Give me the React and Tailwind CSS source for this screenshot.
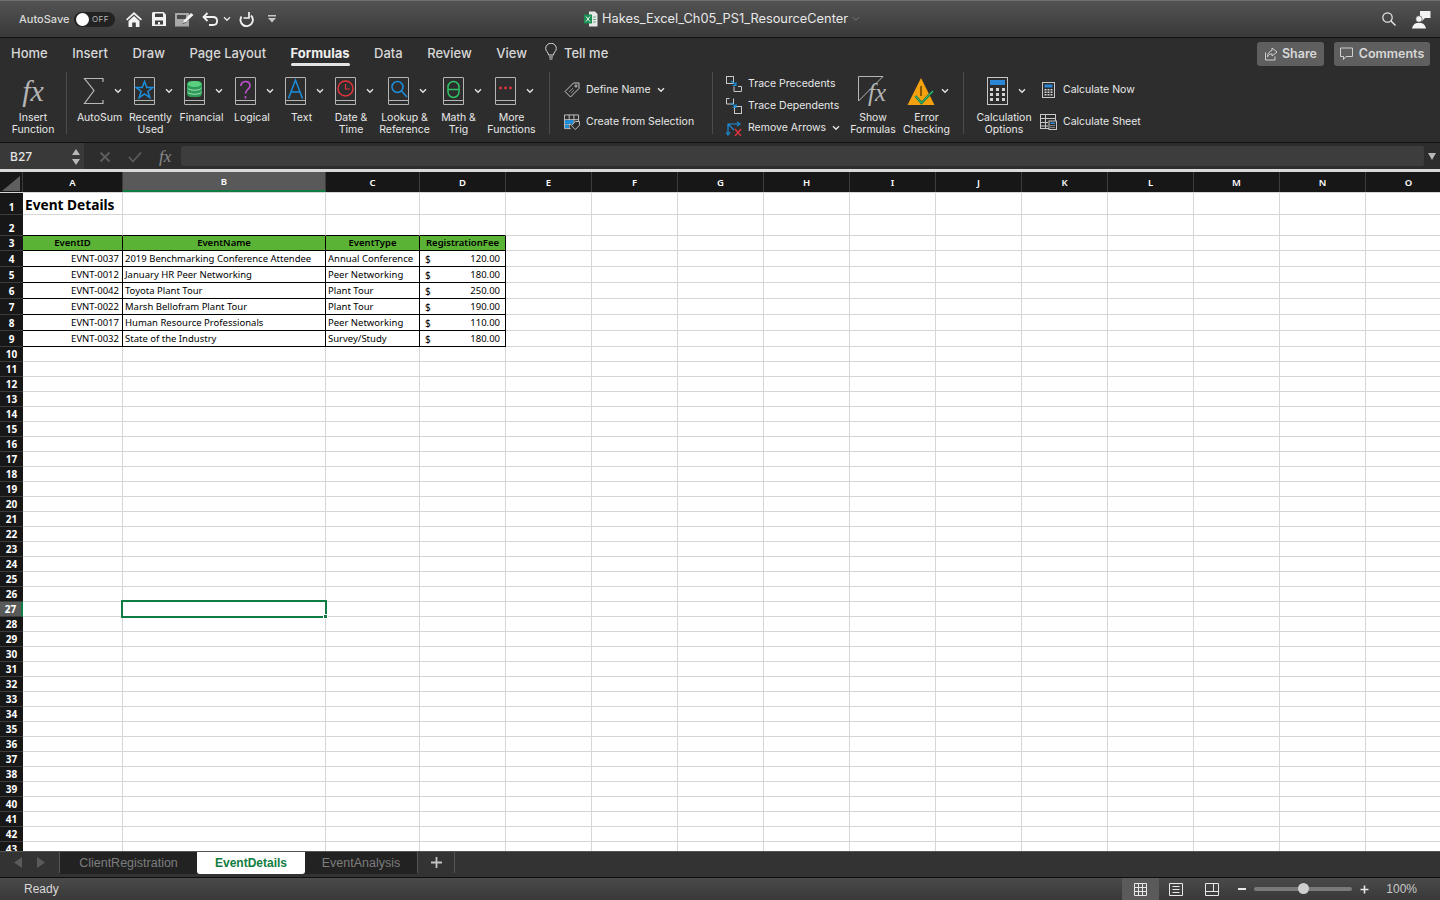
import React from "react";

const COLS = [
  ["A", 100], ["B", 203], ["C", 94], ["D", 86], ["E", 86], ["F", 86], ["G", 86], ["H", 86],
  ["I", 86], ["J", 86], ["K", 86], ["L", 86], ["M", 86], ["N", 86], ["O", 86],
];

const rowHeight = (r) => {
  if (r === 1) return 22;
  if (r === 2) return 21;
  if (r === 3 || r >= 10) return 15;
  return 16;
};

const DATA = [
  ["EVNT-0037", "2019 Benchmarking Conference Attendee", "Annual Conference", "120.00"],
  ["EVNT-0012", "January HR Peer Networking", "Peer Networking", "180.00"],
  ["EVNT-0042", "Toyota Plant Tour", "Plant Tour", "250.00"],
  ["EVNT-0022", "Marsh Bellofram Plant Tour", "Plant Tour", "190.00"],
  ["EVNT-0017", "Human Resource Professionals", "Peer Networking", "110.00"],
  ["EVNT-0032", "State of the Industry", "Survey/Study", "180.00"],
];
const HEAD = ["EventID", "EventName", "EventType", "RegistrationFee"];

function Chevron({ className = "" }) {
  return (
    <svg width="8" height="6" viewBox="0 0 8 6" className={className}>
      <path d="M1 1.2 L4 4.2 L7 1.2" fill="none" stroke="#e4e4e4" strokeWidth="1.4" />
    </svg>
  );
}

function Book({ children }) {
  return (
    <svg width="21" height="28" viewBox="0 0 21 28" className="shrink-0">
      <path d="M1 .5 H20 a.5 .5 0 0 1 .5 .5 V27.5 H1 a.5 .5 0 0 1 -.5 -.5 V1 a.5 .5 0 0 1 .5 -.5 Z" fill="none" stroke="#b5b5b5" />
      <path d="M.5 23.5 H20.5" stroke="#b5b5b5" />
      {children}
    </svg>
  );
}

const ICONS = {
  sigma: (
    <svg width="21" height="28" viewBox="0 0 21 28" className="shrink-0">
      <path d="M20 5 V1.5 H1.5 L11 13.5 L1.5 26.5 H20 V23" fill="none" stroke="#b8b8b8" strokeWidth="1.2" />
    </svg>
  ),
  star: <Book><path d="M10.5 4.5 l2.3 6 h6 l-4.9 3.9 l1.9 6.2 l-5.3 -3.7 l-5.3 3.7 l1.9 -6.2 l-4.9 -3.9 h6 Z" fill="none" stroke="#1c8fdc" strokeWidth="1.5" /></Book>,
  db: (
    <Book>
      <rect x="3" y="4" width="15" height="16" rx="4" fill="#2e9a58" />
      <ellipse cx="10.5" cy="7" rx="7" ry="3" fill="#5ad07f" />
      <path d="M3.5 11 c2 3 12 3 14 0 M3.5 15 c2 3 12 3 14 0" fill="none" stroke="#a8e6bc" strokeWidth="1" />
    </Book>
  ),
  q: <Book><path d="M6 9 c0 -6 9 -6 9 -.5 c0 4 -4.5 4 -4.5 8 M10.5 19 v2.5" fill="none" stroke="#c552d6" strokeWidth="1.6" /></Book>,
  a: <Book><path d="M3.5 21.5 L10.5 3 L17.5 21.5 M6 15 H15" fill="none" stroke="#1c8fdc" strokeWidth="1.5" /></Book>,
  clock: <Book><circle cx="10.5" cy="11.5" r="7.5" fill="none" stroke="#e0353d" strokeWidth="1.5" /><path d="M10.5 7 V12 H15" fill="none" stroke="#e0353d" strokeWidth="1.2" /></Book>,
  search: <Book><circle cx="9.5" cy="10" r="5.5" fill="none" stroke="#1c8fdc" strokeWidth="1.5" /><path d="M13.5 14 L19 20" stroke="#1c8fdc" strokeWidth="1.5" /></Book>,
  theta: <Book><rect x="5" y="4.5" width="11" height="16" rx="5.5" fill="none" stroke="#2fc466" strokeWidth="1.5" /><path d="M5 12.5 H16" stroke="#2fc466" strokeWidth="1.5" /></Book>,
  dots: <Book><circle cx="5.5" cy="11" r="1.4" fill="#e0353d" /><circle cx="10.5" cy="11" r="1.4" fill="#e0353d" /><circle cx="15.5" cy="11" r="1.4" fill="#e0353d" /></Book>,
  calc: (
    <svg width="21" height="28" viewBox="0 0 21 28" className="shrink-0">
      <rect x=".5" y=".5" width="20" height="27" fill="none" stroke="#c8c8c8" />
      <rect x="3" y="3" width="15" height="5" fill="#2a86d6" />
      {[11, 16, 21].map((y) => [3, 9, 15].map((x) => <rect key={`${x}-${y}`} x={x} y={y} width="3" height="3" fill="#d4d4d4" />))}
    </svg>
  ),
  warn: (
    <svg width="28" height="28" viewBox="0 0 28 28" className="shrink-0">
      <path d="M14 1 L27.5 28 H.5 Z" fill="#f4a10f" />
      <path d="M14 9 V19" stroke="#5a3a00" strokeWidth="1.4" />
      <path d="M8.5 19 L14.5 26 L26 14" fill="none" stroke="#0c7a46" strokeWidth="2.4" />
      <path d="M8.5 19 L14.5 26 L26 14" fill="none" stroke="#46c77f" strokeWidth="1" />
    </svg>
  ),
  showfx: (
    <svg width="30" height="30" viewBox="0 0 30 30" className="shrink-0">
      <path d="M25 .5 H.5 V25 Z" fill="none" stroke="#b5b5b5" />
      <text x="10" y="25" fontFamily="'Liberation Serif', serif" fontStyle="italic" fontSize="25" fill="#b5b5b5">fx</text>
    </svg>
  ),
};

function RibbonButton({ w, pl, icon, label, chevron = true, iconW = "w-[21px]", chevronGap = "ml-[10px]" }) {
  return (
    <div className={`shrink-0 flex flex-col ${w}`}>
      <div className={`flex items-center h-[28px] ${pl}`}>
        <div className={`${iconW} flex justify-center`}>{icon}</div>
        {chevron && <Chevron className={chevronGap} />}
      </div>
      <div className="mt-[7px] text-center text-[10.5px] leading-[12px] text-[#e8e8e8] whitespace-nowrap">
        {label.map((l) => <div key={l}>{l}</div>)}
      </div>
    </div>
  );
}

function SmallRow({ icon, text, chevron, h = "h-[22px]", gap = "gap-[6px]" }) {
  return (
    <div className={`flex items-center ${h} ${gap} text-[10.5px] text-[#e8e8e8] whitespace-nowrap`}>
      {icon}
      <span>{text}</span>
      {chevron && <Chevron />}
    </div>
  );
}

const Sep = () => <div className="shrink-0 w-px h-[62px] bg-[#4c4c4c]" />;

function TraceIcon({ variant }) {
  if (variant === "remove") {
    return (
      <svg width="16" height="16" viewBox="0 0 16 16" className="shrink-0">
        <path d="M2 14 V4 H13 M2 4 L8 10" fill="none" stroke="#1c8fdc" strokeWidth="1.2" />
        <path d="M0 12 L2 15 L4 12 M11 2 L14 4 L11 6" fill="none" stroke="#1c8fdc" strokeWidth="1.1" />
        <path d="M9 9 L15 16 M15 9 L9 16" stroke="#e0353d" strokeWidth="1.4" />
      </svg>
    );
  }
  const a = variant === "prec";
  return (
    <svg width="16" height="16" viewBox="0 0 16 16" className="shrink-0">
      {a ? (
        <>
          <rect x=".5" y=".5" width="7" height="7" fill="none" stroke="#c8c8c8" />
          <path d="M8 10.5 V15.5 H15.5 V10.5 H12" fill="none" stroke="#c8c8c8" />
        </>
      ) : (
        <>
          <path d="M3.5 .5 H.5 V6 H7.5 V.5" fill="none" stroke="#c8c8c8" />
          <rect x="8.5" y="8.5" width="7" height="7" fill="none" stroke="#c8c8c8" />
        </>
      )}
      <path d="M5 5 L10 9 M10 6 V9.5 H6.5" fill="none" stroke="#1c8fdc" strokeWidth="1.1" />
    </svg>
  );
}

function TitleBar() {
  return (
    <div className="h-[38px] shrink-0 flex items-center bg-gradient-to-b from-[#535353] to-[#393939] border-t border-t-[#707070] border-b border-b-[#111111] text-[#e6e6e6]">
      <div className="w-[584px] shrink-0 flex items-center pl-[19px]">
        <span className="text-[11px] font-medium text-[#d8d8d8] w-[55px]">AutoSave</span>
        <div className="w-[41px] h-[15px] rounded-full bg-[#222222] flex items-center relative">
          <div className="w-[13px] h-[13px] rounded-full bg-white ml-[2px]" />
          <span className="text-[8px] text-[#bbbbbb] ml-[3px] tracking-[.4px]">OFF</span>
        </div>
        <svg width="16" height="15" viewBox="0 0 16 15" className="ml-[11px]">
          <path d="M8 0 L0 7.300 L1.200 8.600 L8 2.500 L14.800 8.600 L16 7.300 Z" fill="#f2f2f2" />
          <path d="M2.500 9 L8 4 L13.500 9 V15 H9.800 V10.500 H6.200 V15 H2.500 Z" fill="#f2f2f2" />
        </svg>
        <svg width="14" height="14" viewBox="0 0 14 14" className="ml-[10px]">
          <path d="M1 0 H11.500 L14 2.500 V14 H0 V1 Z" fill="#f2f2f2" />
          <rect x="3" y="1.500" width="8" height="3.500" fill="#3f3f3f" />
          <rect x="3" y="8.500" width="8" height="4" fill="#3f3f3f" />
          <rect x="6" y="10" width="2" height="2.500" fill="#f2f2f2" />
        </svg>
        <svg width="19" height="15" viewBox="0 0 19 15" className="ml-[9px]">
          <path d="M0 1 H14 V4 L9 9.500 L7.500 12 L10.500 11 L14 7.500 V14.500 H0 Z" fill="#a8a8a8" />
          <rect x="2" y="3" width="9" height="4" fill="#4a4a4a" />
          <path d="M8 11 L9 8.500 L16 1 L18.500 3 L11 10 Z" fill="#f2f2f2" />
        </svg>
        <svg width="17" height="14" viewBox="0 0 17 14" className="ml-[8px]">
          <path d="M5.500 1 L1.500 5 L5.500 9 M1.500 5 H11 C16.500 5 16.500 13 11 13 H7" fill="none" stroke="#f2f2f2" strokeWidth="1.800" />
        </svg>
        <Chevron className="ml-[4px]" />
        <svg width="15" height="15" viewBox="0 0 15 15" className="ml-[8px]">
          <path d="M2.500 4.500 A6.200 6.200 0 1 0 12 3.500" fill="none" stroke="#f2f2f2" strokeWidth="1.900" />
          <path d="M10 0 V6 H4.500" fill="none" stroke="#f2f2f2" strokeWidth="1.700" />
        </svg>
        <svg width="8" height="8" viewBox="0 0 8 8" className="ml-[14px]">
          <path d="M0 0 H8 V1.400 H0 Z M0 3 H8 L4 7.600 Z" fill="#c8c8c8" />
        </svg>
      </div>
      <svg width="14" height="16" viewBox="0 0 14 16" className="shrink-0">
        <path d="M5 .5 H11 L13.500 3 V15.500 H5 Z" fill="#e8e8e8" />
        <rect x="0" y="3.500" width="8" height="9" fill="#1d8f55" />
        <path d="M2 5.500 L6 10.500 M6 5.500 L2 10.500" stroke="#fff" strokeWidth=".9" />
        <path d="M9 6 H12 M9 8.500 H12 M9 11 H12" stroke="#6aa883" />
      </svg>
      <span className="ml-[4px] text-[12.8px] text-[#e8e8e8] whitespace-nowrap">Hakes_Excel_Ch05_PS1_ResourceCenter</span>
      <svg width="8" height="6" viewBox="0 0 8 6" className="ml-[4px]"><path d="M1 1.200 L4 4.200 L7 1.200" fill="none" stroke="#777" /></svg>
      <div className="ml-auto flex items-center pr-[9px]">
        <svg width="14" height="14" viewBox="0 0 14 14">
          <circle cx="5.500" cy="5.500" r="4.700" fill="none" stroke="#e8e8e8" strokeWidth="1.200" />
          <path d="M9 9 L13.500 13.500" stroke="#e8e8e8" strokeWidth="1.400" />
        </svg>
        <svg width="19" height="19" viewBox="0 0 19 19" className="ml-[16px]">
          <path d="M8 1 H18.500 V8 L13 8 L10 11 V8 H8 Z" fill="#f4f4f4" />
          <circle cx="7" cy="9" r="3.200" fill="#f4f4f4" stroke="#444" strokeWidth=".6" />
          <path d="M0 18.500 C1 14 4 13 5.500 13 H8.500 C10 13 13 14 14 18.500 Z" fill="#f4f4f4" />
        </svg>
      </div>
    </div>
  );
}

function TabRow() {
  const tabs = ["Home", "Insert", "Draw", "Page Layout", "Formulas", "Data", "Review", "View"];
  return (
    <div className="h-[30px] shrink-0 flex items-center pl-[11px] pr-[10px] text-[13px] font-medium text-[#d8d8d8]">
      <div className="flex items-center gap-[24.5px] mt-[2px]">
        {tabs.map((t) => (
          <div key={t} className={t === "Formulas" ? "relative font-bold text-[#f0f0f0]" : ""}>
            {t}
            {t === "Formulas" && <div className="absolute left-0 right-0 top-[19px] h-[3px] rounded-full bg-[#e4e4e4]" />}
          </div>
        ))}
      </div>
      <svg width="12" height="18" viewBox="0 0 12 18" className="ml-[18px] -mt-[2px]">
        <path d="M3.500 12 C3.500 9 .7 8.500 .7 5.500 A5.300 5.300 0 0 1 11.300 5.500 C11.300 8.500 8.500 9 8.500 12 Z" fill="none" stroke="#d8d8d8" />
        <path d="M4 14 H8 M4.500 16 H7.500" stroke="#d8d8d8" />
      </svg>
      <span className="ml-[7px] mt-[2px]">Tell me</span>
      <div className="ml-auto flex items-center gap-[10px] mt-[2px] text-[#d8d8d8] text-[12.5px] font-semibold">
        <div className="w-[67px] h-[24px] rounded-[3px] bg-[#5f5f5f] flex items-center justify-center gap-[4px]">
          <svg width="14" height="14" viewBox="0 0 14 14">
            <path d="M1.500 5.500 V13 H11 V9.500 M8 1 L13 5 L8 9 V6.800 C5.500 6.800 4 8 3.500 10 C3.500 6.500 5.500 4 8 3.500 Z" fill="none" stroke="#d0d0d0" />
          </svg>
          Share
        </div>
        <div className="w-[96px] h-[24px] rounded-[3px] bg-[#5f5f5f] flex items-center justify-center gap-[6px]">
          <svg width="13" height="14" viewBox="0 0 13 14">
            <path d="M.5 1 H12.500 V9.500 H6 L3.500 12.500 V9.500 H.5 Z" fill="none" stroke="#d0d0d0" />
          </svg>
          Comments
        </div>
      </div>
    </div>
  );
}

function Ribbon() {
  return (
    <div className="h-[75px] shrink-0 flex items-start pt-[4px] border-b border-b-[#111111]">
      <div className="w-[66px] shrink-0 flex flex-col items-center pt-[5px]">
        <div className="h-[28px] font-['Liberation_Serif'] italic text-[30px] leading-[28px] text-[#b5b5b5]">fx</div>
        <div className="mt-[7px] text-center text-[10.5px] leading-[12px] text-[#e8e8e8]">Insert<br />Function</div>
      </div>
      <Sep />
      <div className="flex pt-[5px] ml-[7px]">
        <RibbonButton w="w-[51px]" pl="pl-[9px]" icon={ICONS.sigma} label={["AutoSum"]} />
        <RibbonButton w="w-[51px]" pl="pl-[9px]" icon={ICONS.star} label={["Recently", "Used"]} />
        <RibbonButton w="w-[51px]" pl="pl-[8px]" icon={ICONS.db} label={["Financial"]} />
        <RibbonButton w="w-[50px]" pl="pl-[8px]" icon={ICONS.q} label={["Logical"]} />
        <RibbonButton w="w-[49px]" pl="pl-[8px]" icon={ICONS.a} label={["Text"]} />
        <RibbonButton w="w-[50px]" pl="pl-[9px]" icon={ICONS.clock} label={["Date &", "Time"]} />
        <RibbonButton w="w-[57px]" pl="pl-[12px]" icon={ICONS.search} label={["Lookup &", "Reference"]} />
        <RibbonButton w="w-[51px]" pl="pl-[10px]" icon={ICONS.theta} label={["Math &", "Trig"]} />
        <RibbonButton w="w-[55px]" pl="pl-[11px]" icon={ICONS.dots} label={["More", "Functions"]} />
      </div>
      <div className="ml-[10px]"><Sep /></div>
      <div className="w-[162px] shrink-0 flex flex-col pl-[14px] pt-[7px] gap-[10px]">
        <SmallRow
          text="Define Name"
          chevron
          icon={
            <svg width="16" height="16" viewBox="0 0 16 16" className="shrink-0">
              <path d="M9.500 1 H15 V6.500 L6.500 15 L1 9.500 Z" fill="none" stroke="#c8c8c8" />
              <circle cx="12" cy="4" r="1.100" fill="none" stroke="#c8c8c8" />
              <path d="M5 10 L9 6 M7 11 L10 8" stroke="#8a8a8a" />
            </svg>
          }
        />
        <SmallRow
          text="Create from Selection"
          icon={
            <svg width="16" height="16" viewBox="0 0 17 16" className="shrink-0">
              <path d="M.5 .5 H15.500 V10 M.5 .5 V15 H7 M.5 5.500 H15.500 M5.500 .5 V15 M10.500 .5 V9 M.5 10.500 H8" fill="none" stroke="#c8c8c8" />
              <rect x="1" y="6" width="9" height="4" fill="#1c8fdc" />
              <rect x="1" y="11" width="4" height="3.500" fill="#1c8fdc" />
              <path d="M8 12 L12 7.500 H16.500 V11.500 L12 16 Z" fill="#2d2d2d" stroke="#c8c8c8" />
            </svg>
          }
        />
      </div>
      <Sep />
      <div className="w-[135px] shrink-0 flex flex-col pl-[13px] pt-[1px]">
        <SmallRow text="Trace Precedents" icon={<TraceIcon variant="prec" />} />
        <SmallRow text="Trace Dependents" icon={<TraceIcon variant="dep" />} />
        <SmallRow text="Remove Arrows" chevron icon={<TraceIcon variant="remove" />} />
      </div>
      <div className="flex pt-[5px]">
        <RibbonButton w="w-[50px]" pl="pl-[10px]" icon={ICONS.showfx} iconW="w-[30px]" chevron={false} label={["Show", "Formulas"]} />
        <RibbonButton w="w-[57px]" pl="pl-[9px]" icon={ICONS.warn} iconW="w-[28px]" chevronGap="ml-[6px]" label={["Error", "Checking"]} />
      </div>
      <div className="ml-[8px]"><Sep /></div>
      <div className="flex pt-[5px] ml-[6px]">
        <RibbonButton w="w-[68px]" pl="pl-[17px]" icon={ICONS.calc} label={["Calculation", "Options"]} />
      </div>
      <div className="shrink-0 flex flex-col pl-[2px] pt-[7px] gap-[10px]">
        <SmallRow
          text="Calculate Now"
          icon={
            <svg width="17" height="16" viewBox="0 0 17 16" className="shrink-0">
              <rect x="2.500" y=".5" width="12" height="15" fill="none" stroke="#c8c8c8" />
              <rect x="4.500" y="2.500" width="8" height="3" fill="#2a86d6" />
              {[7, 9.5, 12].map((y) => [4.5, 7.5, 10.5].map((x) => <rect key={`${x}-${y}`} x={x} y={y} width="2" height="1.500" fill="#d4d4d4" />))}
            </svg>
          }
        />
        <SmallRow
          text="Calculate Sheet"
          icon={
            <svg width="17" height="16" viewBox="0 0 17 16" className="shrink-0">
              <rect x=".5" y=".5" width="15" height="14" fill="none" stroke="#c8c8c8" />
              <path d="M.5 4.500 H15.500 M.5 8.500 H8 M.5 12 H8 M5.500 .5 V15" stroke="#c8c8c8" />
              <rect x="9" y="7" width="7.500" height="8.500" fill="#2d2d2d" stroke="#c8c8c8" />
              <rect x="10.500" y="8.500" width="4.500" height="1.500" fill="#2a86d6" />
              <path d="M10.500 11.500 H15 M10.500 13.500 H15" stroke="#d4d4d4" strokeDasharray="1 1" />
            </svg>
          }
        />
      </div>
    </div>
  );
}

function FormulaBar() {
  return (
    <div className="h-[29px] shrink-0 flex items-center border-b-[3px] border-b-[#d9d9d9] bg-[#2d2d2d]">
      <div className="w-[84px] h-full flex items-center justify-between pl-[10px] pr-[3px] bg-[#393939]">
        <span className="text-[12px] font-medium text-[#e4e4e4] mt-[2px]">B27</span>
        <svg width="10" height="18" viewBox="0 0 10 18" className="mt-[1px]">
          <path d="M5 1 L9 7 H1 Z M5 17 L9 11 H1 Z" fill="#b8b8b8" />
        </svg>
      </div>
      <svg width="12" height="12" viewBox="0 0 12 12" className="ml-[15px] mt-[1px]">
        <path d="M1.500 1.500 L10.500 10.500 M10.500 1.500 L1.500 10.500" stroke="#5d5d5d" strokeWidth="2" />
      </svg>
      <svg width="14" height="12" viewBox="0 0 14 12" className="ml-[17px] mt-[1px]">
        <path d="M1 6 L5 10.500 L13 1.500" fill="none" stroke="#5d5d5d" strokeWidth="1.800" />
      </svg>
      <div className="ml-[17px] w-[17px] font-['Liberation_Serif'] italic text-[17px] leading-[20px] text-[#8a8a8a] mt-[1px]">fx</div>
      <div className="ml-[5px] w-[1243px] h-[20px] bg-[#3d3d3d] rounded-[2px]" />
      <svg width="8" height="7" viewBox="0 0 8 7" className="ml-[4px]"><path d="M0 0 H8 L4 7 Z" fill="#b8b8b8" /></svg>
    </div>
  );
}

function Cell({ r, c, w }) {
  const inTable = r >= 3 && r <= 9 && c <= 3;
  const base = `shrink-0 h-full relative flex items-center whitespace-nowrap overflow-visible border-b border-r`;
  const bR = inTable ? "border-r-black" : "border-r-[#d6d6d6]";
  const bB = (inTable || (r === 2 && c <= 3)) ? "border-b-black" : "border-b-[#d6d6d6]";
  let content = null;
  let extra = "bg-white text-black";
  if (r === 1 && c === 0) {
    content = <span className="pl-[2px] pt-[2px] font-bold text-[13.7px] leading-none">Event Details</span>;
  }
  if (r === 3 && c <= 3) {
    extra = "bg-[#5bb336] text-black justify-center font-semibold pt-[1px]";
    content = HEAD[c];
  }
  if (r >= 4 && r <= 9 && c <= 3) {
    const d = DATA[r - 4];
    extra += " pt-[2px]";
    if (c === 0) { extra += " justify-end pr-[3px]"; content = d[0]; }
    else if (c === 1) { extra += " pl-[2px]"; content = d[1]; }
    else if (c === 2) { extra += " pl-[2px]"; content = d[2]; }
    else {
      extra += " justify-between pl-[5px] pr-[5px]";
      content = (<><span className="text-[10px]">$</span><span>{d[3]}</span></>);
    }
  }
  const sel = r === 27 && c === 1;
  return (
    <div className={`${base} ${bR} ${bB} ${extra}`} style={{ width: w }}>
      {content}
      {sel && (
        <div className="absolute -left-[2px] -top-[2px] right-[-2px] bottom-[-2px] border-2 border-[#107c41] z-10">
          <div className="absolute -right-[3px] -bottom-[3px] w-[5px] h-[5px] bg-[#107c41] border border-white" />
        </div>
      )}
    </div>
  );
}

function Sheet() {
  const rows = Array.from({ length: 43 }, (_, i) => i + 1);
  return (
    <div className="flex-1 min-h-0 overflow-hidden bg-white font-['Noto_Sans'] text-[9.5px]">
      <div className="flex h-[21px] bg-[#171717] text-white font-semibold text-[9.5px] border-b border-b-[#d6d6d6]">
        <div className="w-[23px] shrink-0 border-r border-r-[#3c3c3c] flex items-end justify-end pr-[2px] pb-[1px]">
          <svg width="18" height="15" viewBox="0 0 18 15"><path d="M18 0 V15 H0 Z" fill="#5f5f5f" /></svg>
        </div>
        {COLS.map(([n, w]) => (
          <div
            key={n}
            className={`shrink-0 flex items-center justify-center pt-[2px] border-r border-r-[#3c3c3c] ${n === "B" ? "bg-[#595959] border-b-2 border-b-[#107c41]" : ""}`}
            style={{ width: w }}
          >
            {n}
          </div>
        ))}
      </div>
      {rows.map((r) => (
        <div key={r} className="flex" style={{ height: rowHeight(r) }}>
          <div className={`w-[23px] shrink-0 flex items-end justify-center font-bold text-white text-[10px] leading-[14px] border-b border-b-[#3c3c3c] ${r === 27 ? "bg-[#595959] border-r-2 border-r-[#107c41]" : "bg-[#171717]"}`}>
            {r}
          </div>
          {COLS.map(([n, w], c) => <Cell key={n} r={r} c={c} w={w} />)}
        </div>
      ))}
    </div>
  );
}

function SheetTabs() {
  return (
    <div className="h-[27px] shrink-0 flex items-start bg-[#333333] border-t border-t-[#555555] border-b border-b-[#0e0e0e] font-['Liberation_Sans'] text-[12.5px]">
      <div className="w-[60px] h-[21px] flex items-center border-r border-r-[#555555] pl-[14px] gap-[15px]">
        <svg width="8" height="11" viewBox="0 0 8 11"><path d="M8 0 V11 L0 5.500 Z" fill="#5a5a5a" /></svg>
        <svg width="8" height="11" viewBox="0 0 8 11"><path d="M0 0 V11 L8 5.500 Z" fill="#5a5a5a" /></svg>
      </div>
      <div className="w-[137px] h-[22px] flex items-center justify-center bg-[#222222] text-[#7d7d7d]">ClientRegistration</div>
      <div className="w-[108px] h-[22px] flex items-center justify-center bg-white rounded-b-[3px] text-[#107c41] font-bold text-[12px]">EventDetails</div>
      <div className="w-[112px] h-[22px] flex items-center justify-center bg-[#222222] text-[#7d7d7d]">EventAnalysis</div>
      <div className="w-[38px] h-[21px] flex items-center justify-center border-r border-r-[#555555] border-l border-l-[#555555]">
        <svg width="11" height="11" viewBox="0 0 11 11"><path d="M5.500 0 V11 M0 5.500 H11" stroke="#c4c4c4" strokeWidth="1.800" /></svg>
      </div>
    </div>
  );
}

function StatusBar() {
  return (
    <div className="h-[22px] shrink-0 flex items-center bg-gradient-to-b from-[#4a4a4a] to-[#393939] pl-[24px] text-[12px] text-[#d8d8d8] font-['Liberation_Sans']">
      <span>Ready</span>
      <div className="ml-auto flex items-center h-full">
        <div className="w-[37px] h-full bg-[#5a5a5a] flex items-center justify-center">
          <svg width="13" height="13" viewBox="0 0 13 13"><path d="M.5 .5 H12.500 V12.500 H.5 Z M4.500 .5 V12.500 M8.500 .5 V12.500 M.5 4.500 H12.500 M.5 8.500 H12.500" fill="none" stroke="#e8e8e8" /></svg>
        </div>
        <svg width="14" height="13" viewBox="0 0 14 13" className="ml-[10px]"><path d="M.5 .5 H13.500 V12.500 H.5 Z" fill="none" stroke="#e8e8e8" /><path d="M3.500 3.500 H10.500 M3.500 6.500 H10.500 M3.500 9.500 H10.500" stroke="#e8e8e8" /></svg>
        <svg width="14" height="13" viewBox="0 0 14 13" className="ml-[22px]"><path d="M.5 .5 H13.500 V12.500 H.5 Z M.5 8.500 H13.500 M8.500 .5 V8.500" fill="none" stroke="#e8e8e8" /></svg>
        <div className="ml-[19px] w-[8px] h-[2px] bg-[#e8e8e8]" />
        <div className="ml-[8px] w-[98px] h-[4px] rounded-full bg-[#7a7a7a] relative">
          <div className="absolute left-[44px] -top-[4px] w-[11px] h-[11px] rounded-full bg-[#cfcfcf]" />
        </div>
        <svg width="9" height="9" viewBox="0 0 9 9" className="ml-[8px]"><path d="M4.500 .5 V8.500 M.5 4.500 H8.500" stroke="#e8e8e8" strokeWidth="1.600" /></svg>
        <span className="ml-[17px] mr-[23px] w-[31px] text-right text-[#c8c8c8]">100%</span>
      </div>
    </div>
  );
}

export default function App() {
  return (
    <div className="w-[1440px] h-[900px] overflow-hidden flex flex-col bg-[#2d2d2d] font-['Inter',sans-serif]">
      <TitleBar />
      <TabRow />
      <Ribbon />
      <FormulaBar />
      <Sheet />
      <SheetTabs />
      <StatusBar />
    </div>
  );
}
